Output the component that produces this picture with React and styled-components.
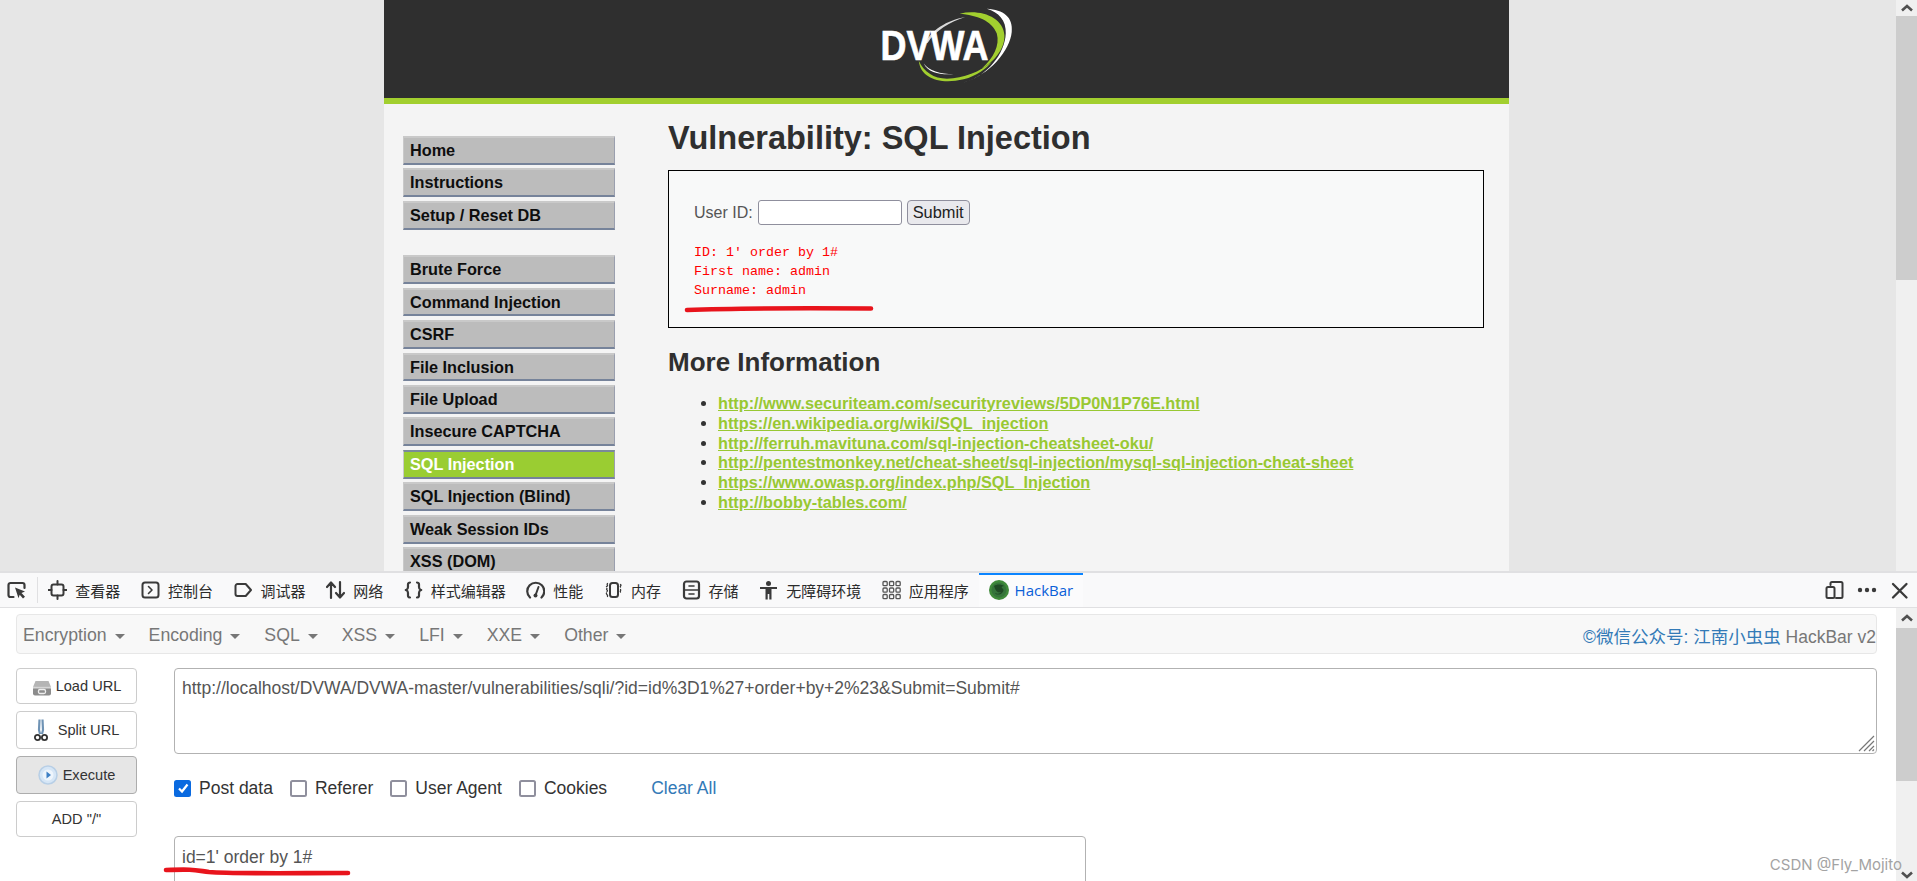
import React from "react";
import styled, { createGlobalStyle } from "styled-components";

const Global = createGlobalStyle`
  html, body { margin: 0; padding: 0; height: 100%; overflow: hidden; background: #fff; }
  * { box-sizing: border-box; }
  body { font-family: "Liberation Sans", Arial, sans-serif; }
`;

const cjk = `"Noto Sans CJK SC", "Noto Sans", sans-serif`;

const Screen = styled.div`
  position: relative;
  width: 1917px;
  height: 881px;
  overflow: hidden;
  display: flex;
  flex-direction: column;
`;

/* ---------- page ---------- */
const Viewport = styled.div`
  height: 571px;
  flex: none;
  display: flex;
  justify-content: space-between;
  background: #e6e6e6;
  overflow: hidden;
  padding-left: 384px;
`;
const Page = styled.div`
  width: 1125px;
  background: #f4f4f4;
  height: 100%;
  overflow: hidden;
`;
const Banner = styled.header`
  height: 104px;
  background: #2f2f2f;
  border-bottom: 6px solid #a2cf2f;
  display: flex;
  justify-content: center;
  padding-top: 7px;
`;
const Columns = styled.div`
  display: flex;
`;
const Sidebar = styled.nav`
  width: 231px;
  flex: none;
  padding: 32px 0 0 19px;
`;
const MenuGroup = styled.div`
  margin-bottom: 25.5px;
`;
const MenuItem = styled.div`
  height: 28.6px;
  margin-bottom: 3.9px;
  background: ${p => (p.$active ? "#9acd32" : "#bcbcbc")};
  border-top: 2px solid ${p => (p.$active ? "#7a8a9a" : "#c9c9c9")};
  border-bottom: 2px solid #76839a;
  border-right: 1px solid #9a9fae;
  border-left: 1px solid #c9c9c9;
  color: ${p => (p.$active ? "#fff" : "#0e0e0e")};
  font-weight: 700;
  font-size: 16.25px;
  line-height: 25px;
  padding-left: 6px;
  white-space: nowrap;
`;
const Main = styled.main`
  margin-left: 53px;
  padding-top: 15px;
  width: 816px;
`;
const Title = styled.h1`
  margin: 0 0 13px;
  font-size: 32.5px;
  line-height: 38px;
  font-weight: 700;
  color: #2f2f2f;
`;
const VulnBox = styled.div`
  position: relative;
  height: 158px;
  background: #f8f9f9;
  border: 1px solid #000;
  padding: 29px 0 0 25px;
`;
const FormRow = styled.div`
  display: flex;
  align-items: center;
  height: 25px;
  font-size: 16px;
  color: #555;
`;
const IdInput = styled.span`
  display: block;
  width: 144px;
  height: 25px;
  margin-left: 5px;
  background: #fff;
  border: 1px solid #8f8f9d;
  border-radius: 3px;
`;
const SubmitButton = styled.span`
  display: flex;
  align-items: center;
  justify-content: center;
  width: 63px;
  height: 25px;
  margin-left: 5px;
  background: #e9e9ed;
  border: 1px solid #8f8f9d;
  border-radius: 4px;
  color: #222;
  font-size: 16.4px;
`;
const Output = styled.pre`
  margin: 17.5px 0 0;
  font-family: "Liberation Mono", "Noto Sans CJK SC", monospace;
  font-size: 13.33px;
  line-height: 19.3px;
  color: #f00;
`;
const Scribble = styled.svg`
  position: absolute;
  display: block;
  overflow: visible;
  pointer-events: none;
`;
const BoxScribble = styled(Scribble)`
  left: 16px;
  top: 134px;
`;
const Subtitle = styled.h2`
  margin: 20px 0 18px;
  font-size: 26px;
  line-height: 28px;
  font-weight: 700;
  color: #2f2f2f;
`;
const LinkList = styled.ul`
  margin: 0;
  padding: 0 0 0 50px;
  font-size: 16.25px;
  line-height: 19.8px;
  color: #333;
`;
const Link = styled.a`
  color: #98c832;
  font-weight: 700;
  text-decoration: underline;
  white-space: nowrap;
`;

/* ---------- scrollbars ---------- */
const Bar = styled.aside`
  width: 21px;
  flex: none;
  background: #f0f0f0;
  display: flex;
  flex-direction: column;
`;
const BarArrow = styled.div`
  height: ${p => p.$h}px;
  flex: none;
  display: flex;
  align-items: center;
  justify-content: center;
`;
const BarThumb = styled.div`
  height: ${p => p.$h}px;
  flex: none;
  background: #cdcdcd;
`;
const BarFill = styled.div`
  flex: 1;
`;

const Chevron = ({ down }) => (
  <svg width="12" height="8" viewBox="0 0 12 8">
    <path d={down ? "M1 1.5 6 6l5-4.5" : "M1 6.5 6 2l5 4.5"} fill="none" stroke="#505050" strokeWidth="2.6" />
  </svg>
);

/* ---------- devtools ---------- */
const Devtools = styled.section`
  flex: 1;
  min-height: 0;
  display: flex;
  flex-direction: column;
  background: #fff;
  border-top: 2px solid #e0e0e2;
`;
const Toolbar = styled.div`
  height: 35px;
  flex: none;
  display: flex;
  align-items: center;
  background: #f9f9fa;
  border-bottom: 1px solid #e0e0e2;
`;
const PickerButton = styled.div`
  width: 38px;
  height: 26px;
  flex: none;
  display: flex;
  align-items: center;
  padding-left: 7px;
  border-right: 1px solid #e0e0e2;
`;
const Tab = styled.div`
  height: 34px;
  display: flex;
  align-items: center;
  gap: ${p => (p.$active ? 6 : 8)}px;
  padding: 0 ${p => (p.$active ? "9.5px" : "10.3px")};
  font-family: ${cjk};
  font-size: 15px;
  color: ${p => (p.$active ? "#0a60d8" : "#2b2b2b")};
  white-space: nowrap;
  ${p => p.$active && "box-shadow: inset 0 2px 0 #0a84ff; background: #fbfbfc;"}
`;
const TabText = styled.span`
  font-family: "Open Sans", sans-serif;
  font-size: 15px;
`;
const ToolbarEnd = styled.div`
  margin-left: auto;
  display: flex;
  align-items: center;
  gap: 13px;
  padding-right: 8px;
`;
const PanelBody = styled.div`
  flex: 1;
  min-height: 0;
  display: flex;
  overflow: hidden;
`;
const HackBar = styled.div`
  flex: 1;
  min-width: 0;
  padding: 6px 19px 0 16px;
  font-size: 17.5px;
  color: #333;
`;
const MenuStrip = styled.div`
  height: 40px;
  display: flex;
  align-items: center;
  background: #f8f8f8;
  border: 1px solid #e7e7e7;
  border-radius: 4px;
  padding: 2px 0 0 6px;
  font-size: 17.7px;
  color: #777;
`;
const StripItem = styled.div`
  display: flex;
  align-items: center;
  gap: 8px;
  margin-right: 24px;
`;
const Caret = styled.span`
  display: block;
  width: 0;
  height: 0;
  margin-top: 2px;
  border-top: 5px solid #777;
  border-left: 5px solid transparent;
  border-right: 5px solid transparent;
`;
const Credit = styled.div`
  margin-left: auto;
  font-size: 17.5px;
  font-family: "Liberation Sans", ${cjk};
  white-space: nowrap;
`;
const CreditLink = styled.span`
  color: #337ab7;
`;
const Workspace = styled.div`
  display: flex;
  gap: 37px;
  margin-top: 13px;
`;
const Actions = styled.div`
  width: 121px;
  flex: none;
  display: flex;
  flex-direction: column;
  gap: 7px;
  padding-top: 1px;
`;
const ActionButton = styled.div`
  height: ${p => p.$h}px;
  display: flex;
  align-items: center;
  justify-content: center;
  gap: 4px;
  background: ${p => (p.$pressed ? "#e6e6e6" : "#fff")};
  border: 1px solid ${p => (p.$pressed ? "#adadad" : "#ccc")};
  border-radius: 4px;
  font-size: 14.6px;
  color: #333;
  white-space: nowrap;
`;
const Fields = styled.div`
  flex: 1;
  min-width: 0;
  padding-top: 1px;
`;
const TextField = styled.div`
  position: relative;
  height: ${p => p.$h}px;
  width: ${p => p.$w || "100%"};
  background: #fff;
  border: 1px solid #b2b2b2;
  border-radius: 4px;
  padding: ${p => p.$top}px 7px 0;
  font-size: 17.5px;
  line-height: 24px;
  color: #555;
  white-space: nowrap;
`;
const ResizeGrip = styled.svg`
  position: absolute;
  right: 1px;
  bottom: 1px;
  display: block;
`;
const Options = styled.div`
  display: flex;
  align-items: center;
  height: 34px;
  margin: 17px 0 31px;
`;
const Option = styled.label`
  display: flex;
  align-items: center;
  gap: 8px;
  margin-right: 17px;
`;
const Box = styled.span`
  display: flex;
  align-items: center;
  justify-content: center;
  width: 17px;
  height: 17px;
  border-radius: 2.5px;
  border: ${p => (p.$on ? "none" : "2px solid #8f8f9d")};
  background: ${p => (p.$on ? "#0a6ae0" : "#fff")};
`;
const ClearAll = styled.span`
  margin-left: 27px;
  color: #337ab7;
`;
const SecondScribble = styled(Scribble)`
  left: 164px;
  top: 867px;
`;
const Watermark = styled.div`
  position: absolute;
  right: 15px;
  top: 856px;
  font-family: "Inter", "Liberation Sans", sans-serif;
  font-size: 15px;
  line-height: 18px;
  color: #a3a3a3;
`;

/* ---------- drawings ---------- */
const Glyph = ({ w = 19, children }) => (
  <svg width={w} height="20" viewBox="0 0 19 20" fill="none" stroke="#3a3a3a" strokeWidth="2" strokeLinecap="round" strokeLinejoin="round" style={{ flex: "none" }}>
    {children}
  </svg>
);

const icons = {
  picker: (
    <>
      <path d="M6.5 17H3.5A2 2 0 0 1 1.5 15V5A2 2 0 0 1 3.5 3H15.5A2 2 0 0 1 17.5 5V8" strokeWidth="2.2" />
      <path d="M8 7.5 18 11.5 14.5 13l3.5 3.7-2 1.8-3.3-3.8L11.5 18.3Z" fill="#3a3a3a" stroke="none" />
    </>
  ),
  inspector: (
    <>
      <rect x="3.5" y="4.5" width="12" height="11" rx="2" />
      <path d="M9.5 1v3.5M9.5 15.5V19M0.5 10h3M15.5 10h3" />
    </>
  ),
  console: (
    <>
      <rect x="1.5" y="2.5" width="16" height="15" rx="2.5" />
      <path d="M7.5 6.5 11 10l-3.5 3.5" strokeWidth="1.6" />
    </>
  ),
  debugger: <path d="M3.5 4h8.2L17 10l-5.3 6H3.5A2 2 0 0 1 1.5 14V6A2 2 0 0 1 3.5 4Z" />,
  network: <path d="M5 18V3M1 7l4-4.5L9 7M14 2v15M10 13l4 4.5 4-4.5" strokeWidth="2.2" />,
  style: (
    <>
      <path d="M6 2.5C3.5 2.5 4 4.5 4 7S3.5 9.3 1.8 10C3.5 10.7 4 10.5 4 13s-.5 4.5 2 4.5" strokeWidth="2.2" />
      <path d="M13 2.5C15.5 2.5 15 4.5 15 7s.5 2.3 2.2 3C15.5 10.700 15 10.500 15 13s.5 4.500-2 4.500" strokeWidth="2.2" />
    </>
  ),
  perf: (
    <>
      <path d="M4 17.500A8.500 8.500 0 1 1 15.500 17.500" strokeWidth="2.2" />
      <path d="M12.500 7 9.800 14.500" />
      <circle cx="9.500" cy="15.500" r="2" fill="#3a3a3a" stroke="none" />
    </>
  ),
  memory: (
    <>
      <rect x="6" y="3" width="8" height="14" rx="2.500" />
      <path d="M3.500 3.500c-1.500 1 1.500 2-1 3.200M3 8.500c-1.500.8 1.500 2 0 3M2.500 13c-1 1 2 2 1 3.500M16.500 4.500c1.500.8-1 1.500 0 2.500M16.500 9.500c1 .8-1 1.500 0 2.500" strokeWidth="1.300" />
    </>
  ),
  storage: (
    <>
      <rect x="2" y="1.500" width="15" height="17" rx="2.500" strokeWidth="2.200" />
      <path d="M2 10h15M7 6h5M7 14h5" strokeWidth="1.600" />
    </>
  ),
  a11y: (
    <>
      <circle cx="9.500" cy="3.500" r="2.500" fill="#3a3a3a" stroke="none" />
      <path d="M1 7h17v2h-5.500v10.500H10.300V14H8.700v5.500H6.500V9H1Z" fill="#3a3a3a" stroke="none" />
    </>
  ),
  apps: (
    <>
      {[1, 7.5, 14].map(x =>
        [1.500, 8, 14.500].map(y => (
          <rect key={`${x}-${y}`} x={x} y={y} width="4.200" height="4.200" rx="1" strokeWidth="1.300" stroke="#555" />
        ))
      )}
    </>
  ),
  responsive: (
    <>
      <path d="M5.500 5V3.500A1.500 1.500 0 0 1 7 2h9A1.500 1.500 0 0 1 17.500 3.500V16.500A1.500 1.500 0 0 1 16 18H11" />
      <rect x="1.500" y="7" width="8" height="11" rx="1.500" />
    </>
  ),
  close: <path d="M3 4 16.500 17.500M16.500 4 3 17.500" strokeWidth="2.300" />,
};

const Dots = () => (
  <svg width="20" height="6" viewBox="0 0 20 6" style={{ flex: "none" }}>
    <circle cx="3" cy="3" r="2.200" fill="#3a3a3a" />
    <circle cx="10" cy="3" r="2.200" fill="#3a3a3a" />
    <circle cx="17" cy="3" r="2.200" fill="#3a3a3a" />
  </svg>
);

const HackBarLogo = () => (
  <svg width="20" height="20" viewBox="0 0 20 20" style={{ flex: "none" }}>
    <circle cx="10" cy="10" r="10" fill="#3f8a3a" />
    <circle cx="10" cy="10" r="7.500" fill="#35743a" />
    <path d="M5 6c3-2 7-2 10 0-2 0-3 1-2 2 2 1 2 3 0 5-2 2-6 2-7 0 2 1 5 1 6-1-3 1-5 0-7-6Z" fill="#1f4a24" />
  </svg>
);

const DriveIcon = () => (
  <svg width="20" height="20" viewBox="0 0 20 20" style={{ flex: "none", marginTop: 4 }}>
    <path d="M3.500 3h13l2.500 6H1Z" fill="#b5b5b5" />
    <rect x="1" y="8.500" width="18" height="9" rx="2" fill="#8c8c8c" />
    <rect x="1" y="8.500" width="18" height="2" fill="#d6d6d6" />
    <rect x="6.500" y="11.500" width="7" height="4" rx="1.500" fill="none" stroke="#eee" strokeWidth="1.300" />
  </svg>
);

const ScissorsIcon = () => (
  <svg width="14" height="24" viewBox="0 0 14 24" style={{ flex: "none", marginRight: 6 }}>
    <path d="M5.500 1.500 5 12l1 4M8.500 1.500 9 12l-1 4" fill="none" stroke="#6f93b5" strokeWidth="2.200" />
    <circle cx="3.500" cy="19.500" r="2.600" fill="none" stroke="#333" strokeWidth="1.800" />
    <circle cx="10.500" cy="19.500" r="2.600" fill="none" stroke="#333" strokeWidth="1.800" />
  </svg>
);

const PlayIcon = () => (
  <svg width="20" height="20" viewBox="0 0 20 20" style={{ flex: "none", marginRight: 1 }}>
    <circle cx="10" cy="10" r="9" fill="#d6e6f6" stroke="#b8cfe6" strokeWidth="1.500" />
    <circle cx="10" cy="10" r="5.500" fill="#eef5fc" />
    <path d="M8.500 6.500 13 10l-4.500 3.500Z" fill="#3d7fc4" />
  </svg>
);

const Logo = () => (
  <svg width="134" height="78" viewBox="120 20 400 235">
    <path d="M440 25C490 28 520 50 515 95C510 150 450 225 365 249C440 232 495 160 497 100C499 60 475 35 440 25Z" fill="#ffffff" />
    <path d="M358 40C420 25 490 50 493 105C495 150 455 190 425 205C460 175 480 135 470 100C455 60 410 45 358 40Z" fill="#a2cf2f" />
    <path d="M235 182C240 235 300 255 370 238C410 228 440 205 455 185C420 215 370 235 320 236C280 236 250 215 235 182Z" fill="#a2cf2f" />
    <path d="M250 190C265 212 300 222 340 222C305 226 262 218 250 190Z" fill="#ffffff" />
    <path d="M255 130C270 90 320 60 375 50C330 64 285 90 262 128Z" fill="#d8d8d8" />
    <text x="120" y="181" fontFamily="Liberation Sans, Arial, sans-serif" fontWeight="700" fontSize="128" fill="#ffffff" stroke="#ffffff" strokeWidth="2" textLength="325" lengthAdjust="spacingAndGlyphs">DVWA</text>
  </svg>
);

const Stroke = ({ d }) => (
  <path d={d} fill="none" stroke="#e8141c" strokeWidth="4.600" strokeLinecap="round" />
);

const menuGroups = [
  ["Home", "Instructions", "Setup / Reset DB"],
  ["Brute Force", "Command Injection", "CSRF", "File Inclusion", "File Upload", "Insecure CAPTCHA", "SQL Injection", "SQL Injection (Blind)", "Weak Session IDs", "XSS (DOM)"],
];
const links = [
  "http://www.securiteam.com/securityreviews/5DP0N1P76E.html",
  "https://en.wikipedia.org/wiki/SQL_injection",
  "http://ferruh.mavituna.com/sql-injection-cheatsheet-oku/",
  "http://pentestmonkey.net/cheat-sheet/sql-injection/mysql-sql-injection-cheat-sheet",
  "https://www.owasp.org/index.php/SQL_Injection",
  "http://bobby-tables.com/",
];
const tabs = [
  ["inspector", "查看器"],
  ["console", "控制台"],
  ["debugger", "调试器"],
  ["network", "网络"],
  ["style", "样式编辑器"],
  ["perf", "性能"],
  ["memory", "内存"],
  ["storage", "存储"],
  ["a11y", "无障碍环境"],
  ["apps", "应用程序"],
];
const strip = ["Encryption", "Encoding", "SQL", "XSS", "LFI", "XXE", "Other"];
const options = [["Post data", true], ["Referer"], ["User Agent"], ["Cookies"]];

export default function App() {
  return (
    <Screen>
      <Global />
      <Viewport>
        <Page>
          <Banner><Logo /></Banner>
          <Columns>
            <Sidebar>
              {menuGroups.map((group, i) => (
                <MenuGroup key={i}>
                  {group.map(item => (
                    <MenuItem key={item} $active={item === "SQL Injection"}>{item}</MenuItem>
                  ))}
                </MenuGroup>
              ))}
            </Sidebar>
            <Main>
              <Title>Vulnerability: SQL Injection</Title>
              <VulnBox>
                <FormRow>
                  User ID:
                  <IdInput />
                  <SubmitButton>Submit</SubmitButton>
                </FormRow>
                <Output>{"ID: 1' order by 1#\nFirst name: admin\nSurname: admin"}</Output>
                <BoxScribble width="190" height="8" viewBox="0 0 190 8">
                  <Stroke d="M2 5C40 3.500 110 3 186 3.500" />
                </BoxScribble>
              </VulnBox>
              <Subtitle>More Information</Subtitle>
              <LinkList>
                {links.map(l => (
                  <li key={l}><Link>{l}</Link></li>
                ))}
              </LinkList>
            </Main>
          </Columns>
        </Page>
        <Bar>
          <BarArrow $h={16}><Chevron /></BarArrow>
          <BarThumb $h={264} />
          <BarFill />
        </Bar>
      </Viewport>
      <Devtools>
        <Toolbar>
          <PickerButton><Glyph>{icons.picker}</Glyph></PickerButton>
          {tabs.map(([icon, label]) => (
            <Tab key={label}>
              <Glyph>{icons[icon]}</Glyph>
              {label}
            </Tab>
          ))}
          <Tab $active>
            <HackBarLogo />
            <TabText>HackBar</TabText>
          </Tab>
          <ToolbarEnd>
            <Glyph>{icons.responsive}</Glyph>
            <Dots />
            <Glyph>{icons.close}</Glyph>
          </ToolbarEnd>
        </Toolbar>
        <PanelBody>
          <HackBar>
            <MenuStrip>
              {strip.map(s => (
                <StripItem key={s}>{s}<Caret /></StripItem>
              ))}
              <Credit>
                <CreditLink>©微信公众号: 江南小虫虫</CreditLink> HackBar v2
              </Credit>
            </MenuStrip>
            <Workspace>
              <Actions>
                <ActionButton $h={36}><DriveIcon />Load URL</ActionButton>
                <ActionButton $h={38}><ScissorsIcon />Split URL</ActionButton>
                <ActionButton $h={38} $pressed><PlayIcon />Execute</ActionButton>
                <ActionButton $h={36}>ADD "/"</ActionButton>
              </Actions>
              <Fields>
                <TextField $h={86} $top={7}>
                  http://localhost/DVWA/DVWA-master/vulnerabilities/sqli/?id=id%3D1%27+order+by+2%23&Submit=Submit#
                  <ResizeGrip width="18" height="18" viewBox="0 0 18 18">
                    <path d="M2 17 17 2M7 17 17 7M12 17l5-5M15.500 17l1.500-1.500" stroke="#777" strokeWidth="1.200" fill="none" />
                  </ResizeGrip>
                </TextField>
                <Options>
                  {options.map(([label, on]) => (
                    <Option key={label}>
                      <Box $on={on}>
                        {on && (
                          <svg width="12" height="12" viewBox="0 0 12 12">
                            <path d="M2 6.500 5 9.500 10.500 2.500" fill="none" stroke="#fff" strokeWidth="2.200" />
                          </svg>
                        )}
                      </Box>
                      {label}
                    </Option>
                  ))}
                  <ClearAll>Clear All</ClearAll>
                </Options>
                <TextField $h={80} $w="912px" $top={8}>id=1' order by 1#</TextField>
              </Fields>
            </Workspace>
          </HackBar>
          <Bar>
            <BarArrow $h={20}><Chevron /></BarArrow>
            <BarThumb $h={153} />
            <BarFill />
            <BarArrow $h={13}><Chevron down /></BarArrow>
          </Bar>
        </PanelBody>
      </Devtools>
      <Watermark>CSDN @Fly_Mojito</Watermark>
      <SecondScribble width="190" height="10" viewBox="0 0 190 10">
        <Stroke d="M2 3C30 2 30 3 45 5C70 7 130 6 184 6" />
      </SecondScribble>
    </Screen>
  );
}
